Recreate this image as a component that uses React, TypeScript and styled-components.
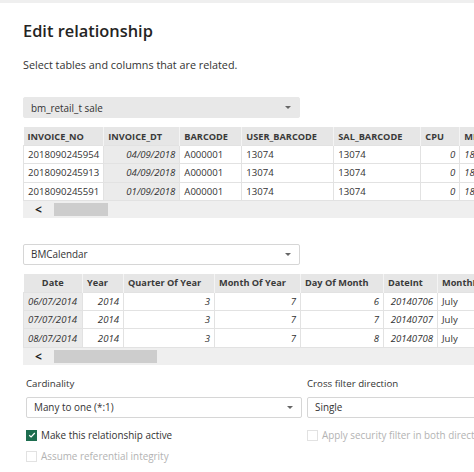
import styled, { createGlobalStyle } from "styled-components";

const GlobalStyle = createGlobalStyle`
  html, body {
    margin: 0;
    padding: 0;
    background: #ffffff;
    overflow: hidden;
  }
  body {
    font-family: "Open Sans", "Noto Sans", sans-serif;
    color: #252423;
  }
`;

const Dialog = styled.div`
  width: 474px;
  height: 472px;
  overflow: hidden;
  border-top: 3px solid #efefef;
  box-sizing: border-box;
  padding-left: 23px;
`;

const Title = styled.h1`
  margin: 16px 0 0;
  font-size: 16.4px;
  font-weight: 600;
  line-height: 24px;
  color: #252423;
`;

const Subtitle = styled.p`
  margin: 14px 0 0;
  font-size: 10.8px;
  line-height: 16px;
  color: #333;
`;

const SelectSlot = styled.div<{ $gap: number }>`
  margin-top: ${({ $gap }) => $gap}px;
`;

const Select = styled.div<{ $filled?: boolean; $width?: number }>`
  display: flex;
  align-items: center;
  justify-content: space-between;
  box-sizing: border-box;
  width: ${({ $width }) => $width ?? 277}px;
  height: 21px;
  padding: 0 8px 0 7px;
  font-size: 9.9px;
  color: #333;
  background: ${({ $filled }) => ($filled ? "#e8e8e8" : "#ffffff")};
  border: 1px solid ${({ $filled }) => ($filled ? "#e8e8e8" : "#d6d6d6")};
  border-radius: 2px;
  flex-shrink: 0;
`;

const Caret = styled.span`
  width: 0;
  height: 0;
  border-left: 3px solid transparent;
  border-right: 3px solid transparent;
  border-top: 3px solid #666;
`;

const TableWrap = styled.div`
  margin-top: 9px;
  width: 520px;
  overflow: hidden;
`;

const Grid = styled.table`
  border-collapse: collapse;
  table-layout: fixed;
  font-size: 9.6px;
  color: #333;
`;

const Th = styled.th<{ $center?: boolean }>`
  height: 18px;
  padding: 0 4px;
  background: #e6e6e6;
  border-right: 1px solid #f4f4f4;
  text-align: ${({ $center }) => ($center ? "center" : "left")};
  font-size: 9.2px;
  font-weight: 700;
  color: #3a3a3a;
  white-space: nowrap;
  overflow: hidden;
`;

const Td = styled.td<{ $num?: boolean; $italic?: boolean; $selected?: boolean }>`
  height: 17.3px;
  padding: 0 4px;
  border: 1px solid #e2e2e2;
  background: ${({ $selected }) => ($selected ? "#ebebeb" : "#ffffff")};
  text-align: ${({ $num }) => ($num ? "right" : "left")};
  font-style: ${({ $italic }) => ($italic ? "italic" : "normal")};
  white-space: nowrap;
  overflow: hidden;
`;

const ScrollBar = styled.div`
  display: flex;
  align-items: center;
  height: 17px;
  background: #efefef;
`;

const ScrollArrow = styled.span`
  width: 31px;
  display: flex;
  justify-content: center;
  font-size: 12px;
  font-weight: 700;
  color: #222;
`;

const ScrollThumb = styled.div<{ $w: number }>`
  width: ${({ $w }) => $w}px;
  height: 13px;
  background: #cdcdcd;
`;

const Options = styled.div`
  margin-top: 12px;
  margin-left: 3px;
  display: grid;
  grid-template-columns: 276px 280px;
  column-gap: 5px;
`;

const Field = styled.div`
  display: flex;
  flex-direction: column;
  gap: 6px;
`;

const Label = styled.div`
  font-size: 9.7px;
  line-height: 14px;
  color: #333;
`;

const Checks = styled.div`
  display: flex;
  flex-direction: column;
  gap: 6px;
  margin-top: 10px;
`;

const CheckRow = styled.label<{ $disabled?: boolean }>`
  display: flex;
  align-items: center;
  gap: 4px;
  font-size: 9.9px;
  line-height: 15px;
  color: ${({ $disabled }) => ($disabled ? "#b3b3b3" : "#333")};
  white-space: nowrap;
`;

const Box = styled.span<{ $checked?: boolean }>`
  box-sizing: border-box;
  width: 11px;
  height: 11px;
  display: flex;
  align-items: center;
  justify-content: center;
  background: ${({ $checked }) => ($checked ? "#1d6d4f" : "#ffffff")};
  border: 1px solid ${({ $checked }) => ($checked ? "#1d6d4f" : "#e2e2e2")};
`;

type Col = { label: string; width: number; num?: boolean; italic?: boolean; selected?: boolean; center?: boolean };

const salesCols: Col[] = [
  { label: "INVOICE_NO", width: 77 },
  { label: "INVOICE_DT", width: 76, num: true, italic: true, selected: true },
  { label: "BARCODE", width: 62 },
  { label: "USER_BARCODE", width: 92 },
  { label: "SAL_BARCODE", width: 87 },
  { label: "CPU", width: 39, num: true, italic: true },
  { label: "MEMBER_ID", width: 80, italic: true },
];

const salesRows = [
  ["2018090245954", "04/09/2018", "A000001", "13074", "13074", "0", "18000001"],
  ["2018090245913", "04/09/2018", "A000001", "13074", "13074", "0", "18000001"],
  ["2018090245591", "01/09/2018", "A000001", "13074", "13074", "0", "18000001"],
];

const calCols: Col[] = [
  { label: "Date", width: 59, italic: true, selected: true, center: true },
  { label: "Year", width: 41, num: true, italic: true },
  { label: "Quarter Of Year", width: 91, num: true, italic: true },
  { label: "Month Of Year", width: 86, num: true, italic: true },
  { label: "Day Of Month", width: 83, num: true, italic: true },
  { label: "DateInt", width: 54, num: true, italic: true },
  { label: "MonthName", width: 80 },
];

const calRows = [
  ["06/07/2014", "2014", "3", "7", "6", "20140706", "July"],
  ["07/07/2014", "2014", "3", "7", "7", "20140707", "July"],
  ["08/07/2014", "2014", "3", "7", "8", "20140708", "July"],
];

function DataPreview({ cols, rows, thumb }: { cols: Col[]; rows: string[][]; thumb: number }) {
  return (
    <TableWrap>
      <Grid>
        <colgroup>
          {cols.map((c) => (
            <col key={c.label} style={{ width: c.width }} />
          ))}
        </colgroup>
        <thead>
          <tr>
            {cols.map((c) => (
              <Th key={c.label} $center={c.center}>
                {c.label}
              </Th>
            ))}
          </tr>
        </thead>
        <tbody>
          {rows.map((r, i) => (
            <tr key={i}>
              {r.map((v, j) => (
                <Td key={j} $num={cols[j].num} $italic={cols[j].italic} $selected={cols[j].selected}>
                  {v}
                </Td>
              ))}
            </tr>
          ))}
        </tbody>
      </Grid>
      <ScrollBar>
        <ScrollArrow>&lt;</ScrollArrow>
        <ScrollThumb $w={thumb} />
      </ScrollBar>
    </TableWrap>
  );
}

function Check({ label, checked, disabled }: { label: string; checked?: boolean; disabled?: boolean }) {
  return (
    <CheckRow $disabled={disabled}>
      <Box $checked={checked}>
        {checked && (
          <svg width="8" height="8" viewBox="0 0 8 8">
            <path d="M1.2 4.2 L3.1 6 L6.8 2" fill="none" stroke="#fff" strokeWidth="1.2" />
          </svg>
        )}
      </Box>
      {label}
    </CheckRow>
  );
}

export default function App() {
  return (
    <>
      <GlobalStyle />
      <Dialog>
        <Title>Edit relationship</Title>
        <Subtitle>Select tables and columns that are related.</Subtitle>

        <SelectSlot $gap={24}>
          <Select $filled>
            <span>bm_retail_t sale</span>
            <Caret />
          </Select>
        </SelectSlot>
        <DataPreview cols={salesCols} rows={salesRows} thumb={54} />

        <SelectSlot $gap={26}>
          <Select>
            <span>BMCalendar</span>
            <Caret />
          </Select>
        </SelectSlot>
        <DataPreview cols={calCols} rows={calRows} thumb={103} />

        <Options>
          <Field>
            <Label>Cardinality</Label>
            <Select $width={276}>
              <span>Many to one (*:1)</span>
              <Caret />
            </Select>
          </Field>
          <Field>
            <Label>Cross filter direction</Label>
            <Select $width={280}>
              <span>Single</span>
            </Select>
          </Field>
          <Checks>
            <Check label="Make this relationship active" checked />
            <Check label="Assume referential integrity" disabled />
          </Checks>
          <Checks>
            <Check label="Apply security filter in both directions" disabled />
          </Checks>
        </Options>
      </Dialog>
    </>
  );
}
